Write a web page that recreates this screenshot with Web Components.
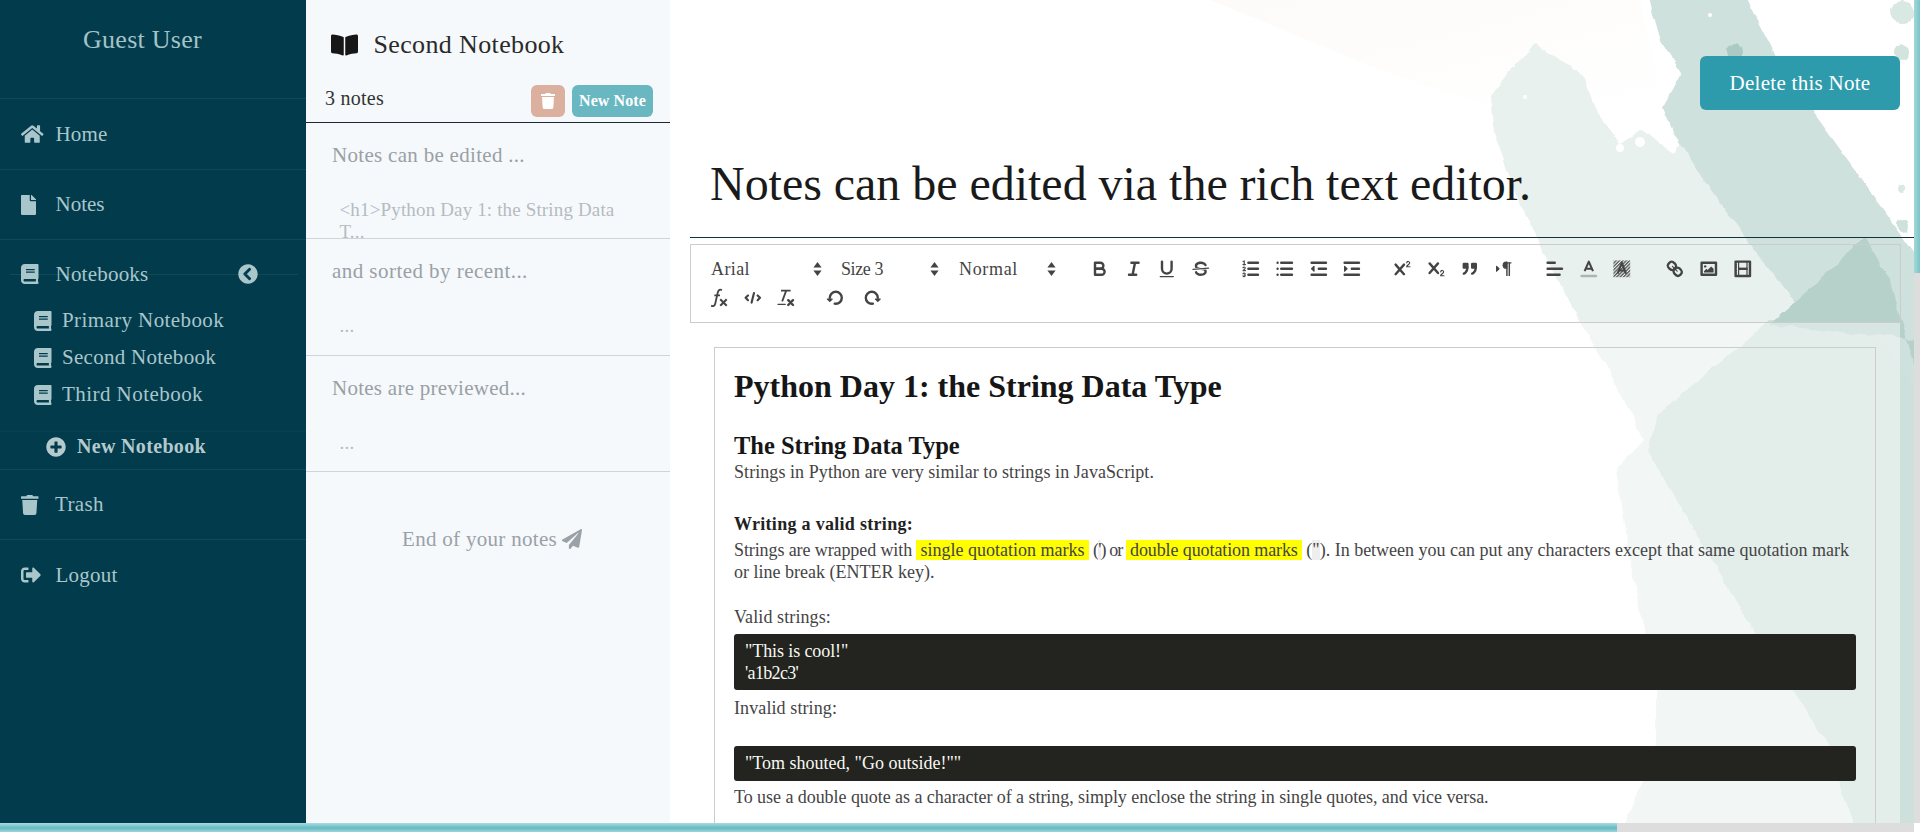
<!doctype html>
<html lang="en"><head><meta charset="utf-8"><title>Notes</title>
<style>
html,body{margin:0;height:100%;overflow:hidden;background:#fff}
body{font-family:"Liberation Serif",serif;color:#444}
</style></head>
<body>
<notes-app>
  <side-bar slot="side">
    <span slot="user">Guest User</span>
    <nav-item icon="home" ls=".17">Home</nav-item>
    <nav-item icon="file" h="69">Notes</nav-item>
    <notebook-group>
      <span slot="label" style="letter-spacing:.22px">Notebooks</span>
      <book-link ls=".4">Primary Notebook</book-link>
      <book-link ls=".27">Second Notebook</book-link>
      <book-link ls=".45">Third Notebook</book-link>
      <span slot="new">New Notebook</span>
    </notebook-group>
    <nav-item icon="trash" ls=".38" gap="34" h="69">Trash</nav-item>
    <nav-item icon="out" ls=".22" last>Logout</nav-item>
  </side-bar>
  <note-panel slot="panel">
    <span slot="title">Second Notebook</span>
    <span slot="count">3 notes</span>
    <note-item ls=".3" pls=".15"><span slot="title">Notes can be edited ...</span>&lt;h1&gt;Python Day 1: the String Data T...</note-item>
    <note-item ls=".45" pls=".2" h="117"><span slot="title">and sorted by recent...</span>...</note-item>
    <note-item ls=".26" pls=".2"><span slot="title">Notes are previewed...</span>...</note-item>
  </note-panel>
  <main-pane slot="main">
    <span slot="title">Notes can be edited via the rich text editor.</span>
    <rich-toolbar slot="toolbar"></rich-toolbar>
    <note-doc slot="doc"></note-doc>
  </main-pane>
</notes-app>

<script>
const FA={
home:[576,'M280.37 148.26L96 300.11V464a16 16 0 0 0 16 16l112.06-.29a16 16 0 0 0 15.92-16V368a16 16 0 0 1 16-16h64a16 16 0 0 1 16 16v95.64a16 16 0 0 0 16 16.05L464 480a16 16 0 0 0 16-16V300L295.67 148.26a12.19 12.19 0 0 0-15.3 0zM571.6 251.47L488 182.56V44.05a12 12 0 0 0-12-12h-56a12 12 0 0 0-12 12v72.61L318.47 43a48 48 0 0 0-61 0L4.34 251.47a12 12 0 0 0-1.6 16.9l25.5 31A12 12 0 0 0 45.15 301l235.22-193.74a12.19 12.19 0 0 1 15.3 0L530.9 301a12 12 0 0 0 16.9-1.6l25.5-31a12 12 0 0 0-1.7-16.93z'],
file:[384,'M224 136V0H24C10.7 0 0 10.7 0 24v464c0 13.3 10.7 24 24 24h336c13.3 0 24-10.7 24-24V160H248c-13.2 0-24-10.8-24-24zm160-14.1v6.1H256V0h6.1c6.4 0 12.5 2.5 17 7l97.9 98c4.5 4.5 7 10.6 7 16.9z'],
book:[448,'M448 360V24c0-13.3-10.7-24-24-24H96C43 0 0 43 0 96v320c0 53 43 96 96 96h328c13.3 0 24-10.7 24-24v-16c0-7.5-3.5-14.3-8.9-18.7-4.2-15.4-4.2-59.3 0-74.7 5.4-4.3 8.9-11.1 8.9-18.6zM128 134c0-3.3 2.7-6 6-6h212c3.3 0 6 2.7 6 6v20c0 3.3-2.7 6-6 6H134c-3.3 0-6-2.7-6-6v-20zm0 64c0-3.3 2.7-6 6-6h212c3.3 0 6 2.7 6 6v20c0 3.3-2.7 6-6 6H134c-3.3 0-6-2.7-6-6v-20zm253.4 250H96c-17.7 0-32-14.3-32-32 0-17.6 14.4-32 32-32h285.4c-1.9 17.1-1.9 46.9 0 64z'],
open:[576,'M542.22 32.05c-54.8 3.11-163.72 14.43-230.96 55.59-4.64 2.84-7.27 7.89-7.27 13.17v363.87c0 11.55 12.63 18.85 23.28 13.49 69.18-34.82 169.23-44.32 218.7-46.92 16.89-.89 30.02-14.43 30.02-30.66V62.75c.01-17.71-15.35-31.74-33.77-30.7zM264.73 87.64C197.5 46.48 88.58 35.17 33.78 32.05 15.36 31.01 0 45.04 0 62.75V400.6c0 16.24 13.13 29.78 30.02 30.66 49.49 2.6 149.59 12.11 218.77 46.95 10.62 5.35 23.21-1.94 23.21-13.46V100.63c0-5.29-2.62-10.14-7.27-12.99z'],
chev:[512,'M256 504C119 504 8 393 8 256S119 8 256 8s248 111 248 248-111 248-248 248zM142.1 273l135.5 135.5c9.4 9.4 24.6 9.4 33.9 0l17-17c9.4-9.4 9.4-24.6 0-33.9L226.9 256l101.6-101.6c9.4-9.4 9.4-24.6 0-33.9l-17-17c-9.4-9.4-24.6-9.4-33.9 0L142.1 239c-9.4 9.4-9.4 24.6 0 34z'],
plus:[512,'M256 8C119 8 8 119 8 256s111 248 248 248 248-111 248-248S393 8 256 8zm144 276c0 6.6-5.4 12-12 12h-92v92c0 6.6-5.4 12-12 12h-56c-6.6 0-12-5.4-12-12v-92h-92c-6.6 0-12-5.4-12-12v-56c0-6.6 5.4-12 12-12h92v-92c0-6.6 5.4-12 12-12h56c6.6 0 12 5.4 12 12v92h92c6.6 0 12 5.4 12 12v56z'],
trash:[448,'M432 32H312l-9.4-18.7A24 24 0 0 0 281.1 0H166.8a23.72 23.72 0 0 0-21.4 13.3L136 32H16A16 16 0 0 0 0 48v32a16 16 0 0 0 16 16h416a16 16 0 0 0 16-16V48a16 16 0 0 0-16-16zM53.2 467a48 48 0 0 0 47.9 45h245.8a48 48 0 0 0 47.9-45L416 128H32z'],
out:[512,'M497 273L329 441c-15 15-41 4.5-41-17v-96H152c-13.3 0-24-10.7-24-24v-96c0-13.3 10.7-24 24-24h136V88c0-21.4 25.9-32 41-17l168 168c9.3 9.4 9.3 24.6 0 34zM192 436v-40c0-6.6-5.4-12-12-12H96c-17.7 0-32-14.3-32-32V160c0-17.7 14.3-32 32-32h84c6.6 0 12-5.4 12-12V76c0-6.6-5.4-12-12-12H96c-53 0-96 43-96 96v192c0 53 43 96 96 96h84c6.6 0 12-5.4 12-12z'],
plane:[512,'M476 3.2L12.5 270.6c-18.1 10.4-15.8 35.6 2.2 43.2L121 358.4l287.3-253.2c5.5-4.9 13.3 2.6 8.6 8.3L176 407v80.5c0 23.6 28.5 32.9 42.5 15.8L282 426l124.6 52.2c14.2 6 30.4-2.9 33-18.2l72-432C515 7.8 493.3-6.8 476 3.2z']
};
const fa=(n,z)=>{const [w,d]=FA[n];return `<svg xmlns="http://www.w3.org/2000/svg" viewBox="0 0 ${w} 512" width="${w*z/512}" height="${z}" fill="currentColor" style="display:block;flex:none"><path d="${d}"/></svg>`};

function def(tag,css,html,init){
  customElements.define(tag,class extends HTMLElement{
    constructor(){super();const r=this.attachShadow({mode:'open'});
      r.innerHTML=`<style>${css}</style>`+(typeof html==='function'?html(this):html);
      if(init)init(this,r)}
  });
}

/* ---------- shell ---------- */
def('notes-app',`:host{display:flex;flex-direction:column;width:1920px;height:832px}
.row{display:flex;flex:1;min-height:0}
.vbar{width:6px;flex:none;background:#ddd}
.vthumb{height:273px;background:linear-gradient(90deg,#a2d9d9,#7cc3c9)}
.foot{display:flex;height:9px;flex:none}
.htrack{flex:1;background:#ddd}
.hthumb{width:1617px;height:100%;background:linear-gradient(#a9dcdc,#64bac3 55%,#9ed6d8)}
.corner{width:6px;background:#fff}`,
`<div class="row"><slot name="side"></slot><slot name="panel"></slot><slot name="main"></slot><div class="vbar"><div class="vthumb"></div></div></div>
<div class="foot"><div class="htrack"><div class="hthumb"></div></div><div class="corner"></div></div>`);

/* ---------- sidebar ---------- */
def('side-bar',`:host{display:block;width:306px;flex:none;background:#023b4c;color:#a9c6cb;font-size:21px}
.user{height:98px;border-bottom:1px solid #10495a;text-align:center;font-size:26px;letter-spacing:.27px;line-height:30px;color:#a3c3c7}
.user span{display:block;padding:25px 21px 0 0}`,
`<div class="user"><span><slot name="user"></slot></span></div><slot></slot>`);

def('nav-item',`:host{display:flex;align-items:center;padding-left:21px;border-bottom:1px solid #10495a}
:host([last]){border-bottom:0}
.i{width:34.5px;flex:none}`,
el=>{el.style.height=(el.getAttribute('h')||70)+'px';return `<div class="i" style="${el.getAttribute('gap')?`width:${el.getAttribute('gap')}px`:''}">${fa(el.getAttribute('icon'),20)}</div><span style="letter-spacing:${el.getAttribute('ls')||0}px"><slot></slot></span>`});

def('notebook-group',`:host{display:block;border-bottom:1px solid #10495a;height:230px;box-sizing:border-box}
.head{display:flex;align-items:center;height:62px;padding:6px 48px 0 21px;box-sizing:border-box;
 background:linear-gradient(#10495a,#10495a) 10px 34px/288px 1px no-repeat;width:306px}
.i{width:34.5px;flex:none}
.grow{flex:1}
.list{height:111px;margin-bottom:18px}
.new{display:flex;align-items:center;height:37px;padding:0 0 7px 46px;box-sizing:border-box;border-top:1px solid #07404f;font-weight:700;font-size:20px;letter-spacing:.33px;color:#b4cace}
.new .i{width:31px}`,
`<div class="head"><div class="i">${fa('book',20)}</div><slot name="label"></slot><div class="grow"></div>${fa('chev',20)}</div>
<div class="list"><slot></slot></div>
<div class="new"><div class="i">${fa('plus',20)}</div><slot name="new"></slot></div>`);

def('book-link',`:host{display:flex;align-items:center;height:37px;padding-left:34px}
.i{width:28px;flex:none}`,
el=>`<div class="i">${fa('book',20)}</div><span style="letter-spacing:${el.getAttribute('ls')||0}px"><slot></slot></span>`);

/* ---------- note list ---------- */
def('note-panel',`:host{display:block;width:364px;flex:none;background:#f5f9fc;color:#222}
.title{display:flex;align-items:center;height:85px;box-sizing:border-box;padding:4px 0 0 25px;font-size:26px;letter-spacing:.36px;color:#2a2a2a}
.title .i{width:42.5px;color:#171717;flex:none}
.bar{display:flex;align-items:center;height:38px;box-sizing:border-box;padding:0 17px 5px 19px;border-bottom:1px solid #1a2a33;font-size:20px;letter-spacing:.25px;color:#333}
.bar .c{flex:1;padding-bottom:5px}
button{all:unset;box-sizing:border-box;height:32px;border-radius:6px;display:flex;align-items:center;justify-content:center;color:#fff}
.del{width:34px;background:#dcb09e;margin-right:7px}
.new{width:81px;background:#68b7c1;font:700 16px "Liberation Serif",serif;letter-spacing:.1px}
.end{display:flex;align-items:center;justify-content:center;gap:5px;padding:55px 0 0 8px;font-size:21px;letter-spacing:.3px;color:#9aa1a7;line-height:24px}`,
`<div class="title"><div class="i">${fa('open',24)}</div><slot name="title"></slot></div>
<div class="bar"><span class="c"><slot name="count"></slot></span><button class="del" aria-label="Delete notebook">${fa('trash',16)}</button><button class="new">New Note</button></div>
<slot></slot>
<div class="end"><span>End of your notes</span>${fa('plane',20)}</div>`);

def('note-item',`:host{display:block;box-sizing:border-box;border-bottom:1px solid #cfd4d8;overflow:hidden}
.t{padding:20px 0 0 26px;font-size:21px;line-height:24px;color:#9aa0a5}
.p{margin:32px 0 0 33.5px;width:300px;font-size:19px;line-height:22px;color:#b6bbbf}`,
el=>{el.style.height=(el.getAttribute('h')||116)+'px';return `<div class="t" style="letter-spacing:${el.getAttribute('ls')}px"><slot name="title"></slot></div><div class="p" style="letter-spacing:${el.getAttribute('pls')}px"><slot></slot></div>`});

/* ---------- main ---------- */
def('wash-bg',`:host{position:absolute;inset:0;display:block;overflow:hidden}svg{display:block}`,
`<svg xmlns="http://www.w3.org/2000/svg" width="1244" height="823" viewBox="670 0 1244 823">
<defs><filter id="rough" filterUnits="userSpaceOnUse" x="1300" y="-20" width="640" height="870" color-interpolation-filters="sRGB">
<feTurbulence type="fractalNoise" baseFrequency=".05" numOctaves="3" seed="7"/>
<feDisplacementMap in="SourceGraphic" scale="7" xChannelSelector="R" yChannelSelector="G"/></filter>
<linearGradient id="warm" x1="0" y1="0" x2="1" y2="1"><stop offset="0" stop-color="#fdfbf9"/><stop offset="1" stop-color="#fff"/></linearGradient></defs>
<polygon points="1210,0 1640,0 1660,90 1500,110 1380,70" fill="url(#warm)"/>
<g filter="url(#rough)">
<polygon fill="#e8f1ee" points="1490,97 1510,70 1537,43 1560,60 1585,77 1595,110 1620,143 1640,130 1675,153 1700,110 1853,167 1914,260 1920,840 1616,840 1656,753 1656,687 1628,553 1616,470 1644,440 1632,413 1577,317 1521,207 1494,133"/>
<polygon fill="#cfe1dc" points="1644,-15 1660,40 1682,72 1662,108 1672,130 1700,175 1770,270 1830,350 1890,470 1925,560 1925,270 1853,167 1790,80 1775,53 1740,-15"/>
<polygon fill="#cde0db" points="1656,417 1770,320 1870,323 1925,400 1925,840 1858,840 1826,740 1755,633 1648,453"/>
<polygon fill="#b6d1ca" points="1806,293 1865,237 1890,280 1925,400 1925,340 1770,325"/>
<circle cx="1735" cy="52" r="8" fill="#abcac3"/>
<circle cx="1902" cy="12" r="11" fill="#dae8e4"/>
<circle cx="1903" cy="52" r="8" fill="#d3e3de"/>
<circle cx="1901" cy="188" r="4" fill="#dae8e4"/>
<circle cx="1903" cy="225" r="6" fill="#cfe1dc"/>
</g>
<g fill="#fff"><circle cx="1525" cy="97" r="2"/><circle cx="1620" cy="148" r="4"/><circle cx="1640" cy="142" r="5"/><circle cx="1710" cy="15" r="2"/></g>
</svg>`);

def('main-pane',`:host{display:flex;flex-direction:column;flex:1;min-width:0;position:relative;overflow:hidden;background:#fff}
.content{position:relative;display:flex;flex-direction:column;flex:1;min-height:0;padding-left:20px}
.top{display:flex;justify-content:flex-end;padding:56px 14px 0 0}
button{all:unset;box-sizing:border-box;width:200px;height:54px;border-radius:6px;background:#2e9bac;color:#fff;text-align:center;font:21px "Liberation Serif",serif;letter-spacing:.28px}
h1{margin:46px 0 25px 20px;font-weight:400;font-size:48px;line-height:56px;letter-spacing:-.03px;color:#1a1a1a;white-space:nowrap}
hr{margin:0 0 6px;border:0;border-top:1px solid #0f3440;height:0}
.body{flex:1;min-height:0;width:1210px;background:rgba(255,255,255,.45);padding:24px 24px 0;box-sizing:border-box;overflow:hidden;display:flex}`,
`<wash-bg></wash-bg><div class="content"><div class="top"><button>Delete this Note</button></div>
<h1><slot name="title"></slot></h1><hr><slot name="toolbar"></slot><div class="body"><slot name="doc"></slot></div></div>`);

/* ---------- toolbar ---------- */
const T=(d)=>`<svg xmlns="http://www.w3.org/2000/svg" viewBox="0 0 18 18" width="21.6" height="21.6" fill="none" stroke="#444" stroke-width="2" stroke-linecap="round" stroke-linejoin="round" style="display:block">${d}</svg>`;
const F='fill="#444" stroke="none"';
const FS='fill="#444" stroke-width="1"';
const Q={
bold:'<path d="M5,4H9.5A2.5,2.5,0,0,1,12,6.5v0A2.5,2.5,0,0,1,9.5,9H5A0,0,0,0,1,5,9V4A0,0,0,0,1,5,4Z"/><path d="M5,9h5.5A2.5,2.5,0,0,1,13,11.5v0A2.5,2.5,0,0,1,10.5,14H5a0,0,0,0,1,0,0V9A0,0,0,0,1,5,9Z"/>',
italic:'<path d="M7 4H13M5 14H11M8 14L10 4"/>',
underline:`<path d="M5,3V9a4.012,4.012,0,0,0,4,4H9a4.012,4.012,0,0,0,4-4V3"/><rect ${F} height="1" rx=".5" width="12" x="3" y="15"/>`,
strike:`<path stroke-width="1" d="M15.5 8.5L2.5 9.5"/><path ${F} d="M9.007,8C6.542,7.791,6,7.519,6,6.5,6,5.792,7.283,5,9,5c1.571,0,2.765.679,2.969,1.309a1,1,0,0,0,1.9-.617C13.356,4.106,11.354,3,9,3,6.2,3,4,4.538,4,6.5a3.2,3.2,0,0,0,.5,1.843Z"/><path ${F} d="M8.984,10C11.457,10.208,12,10.479,12,11.5c0,.708-1.283,1.5-3,1.5-1.571,0-2.765-.679-2.969-1.309a1,1,0,1,0-1.9.617C4.644,13.894,6.646,15,9,15c2.8,0,5-1.538,5-3.5a3.2,3.2,0,0,0-.5-1.843Z"/>`,
ol:`<path d="M7 4H15M7 9H15M7 14H15"/><path stroke-width="1" d="M2.5 5.5H4.5"/><path ${F} d="M3.5,6A.5.5,0,0,1,3,5.5V3.085l-.276.138A.5.5,0,0,1,2.053,3c-.124-.247-.023-.324.224-.447l1-.5A.5.5,0,0,1,4,2.5v3A.5.5,0,0,1,3.5,6Z"/><path stroke-width="1" d="M4.5,10.5h-2c0-.234,1.85-1.076,1.85-2.234A.959.959,0,0,0,2.5,8.156"/><path stroke-width="1" d="M2.5,14.846a.959.959,0,0,0,1.85-.109A.7.7,0,0,0,3.75,14a.688.688,0,0,0,.6-.736,.959.959,0,0,0-1.85-.109"/>`,
ul:'<path d="M6 4H15M6 9H15M6 14H15M3 4H3M3 9H3M3 14H3"/>',
outdent:`<path d="M3 14H15M3 4H15M9 9H15"/><polygon ${FS} points="5 7 5 11 3 9"/>`,
indent:`<path d="M3 14H15M3 4H15M9 9H15"/><polygon ${FS} points="3 7 3 11 5 9"/>`,
sup:'<path d="M3 5.5L10 13.5M10 5.5L3 13.5"/><path stroke-width="1" d="M12.3 4a1.2 1.2 0 0 1 2.4.2c0 1-2.5 1.9-2.5 3.1h2.8"/>',
sub:'<path d="M3 4.5L10 12.5M10 4.5L3 12.5"/><path stroke-width="1" d="M12.3 11.5a1.2 1.2 0 0 1 2.4.2c0 1-2.5 1.9-2.5 3.1h2.8"/>',
quote:`<rect fill="#444" height="3" width="3" x="4" y="5"/><rect fill="#444" height="3" width="3" x="11" y="5"/><path fill="#444" d="M7,8c0,4.031-3,5-3,5"/><path fill="#444" d="M14,8c0,4.031-3,5-3,5"/>`,
dir:`<polygon ${FS} points="3 11 5 9 3 7"/><path stroke-width="1" d="M15 4H11"/><path ${F} d="M11,3a3,3,0,0,0,0,6h1V3H11Z"/><rect ${F} height="11" width="1.2" x="11" y="4"/><rect ${F} height="11" width="1.2" x="13" y="4"/>`,
align:'<path d="M3 9H15M3 14H13M3 4H9"/>',
color:'<path stroke="#a9b6b4" d="M3 15H15"/><path stroke-width="1.7" stroke-linecap="butt" d="M5.5 11L9 3L12.5 11M11.6 9H6.4"/>',
bg:`<defs><pattern id="h" width="2" height="2" patternUnits="userSpaceOnUse" patternTransform="rotate(45)"><rect width="1.1" height="2" fill="#555" stroke="none"/></pattern></defs><rect x="2" y="2" width="14" height="14" fill="url(#h)" stroke="none"/><path stroke-width="1.7" stroke-linecap="butt" d="M5.5 13L9 4L12.5 13M11.6 10.5H6.4"/>`,
link:'<path stroke-width="1" d="M7 7L11 11"/><path d="M8.9,4.577a3.476,3.476,0,0,1,.36,4.679A3.476,3.476,0,0,1,4.577,8.9C3.185,7.5,2.035,6.4,4.217,4.217S7.5,3.185,8.9,4.577Z"/><path d="M13.423,9.1a3.476,3.476,0,0,0-4.679-.36,3.476,3.476,0,0,0,.36,4.679c1.392,1.392,2.5,2.542,4.679.36S14.815,10.5,13.423,9.1Z"/>',
image:`<rect height="10" width="12" x="3" y="4"/><circle ${F} cx="6" cy="7" r="1"/><polygon ${F} points="5 12 5 11 7 9 8 10 11 7 13 9 13 12"/>`,
video:`<rect height="12" width="12" x="3" y="3"/><g ${F}><rect height="12" width="1" x="5" y="3"/><rect height="12" width="1" x="12" y="3"/><rect height="2" width="8" x="5" y="8"/><rect height="1" width="1" x="3" y="5"/><rect height="1" width="1" x="3" y="7"/><rect height="1" width="1" x="3" y="10"/><rect height="1" width="1" x="3" y="12"/><rect height="1" width="1" x="14" y="5"/><rect height="1" width="1" x="14" y="7"/><rect height="1" width="1" x="14" y="10"/><rect height="1" width="1" x="14" y="12"/></g>`,
formula:'<path stroke-width="1.5" stroke-linecap="butt" d="M11.6 2.6C10 1.7 8.7 2.3 8.2 4.4L6 14c-.4 1.8-1.7 2.3-3.4 1.5M5.3 7H10"/><path stroke-width="1.7" stroke-linecap="butt" d="M10.2 10.2L15.6 15.6M15.6 10.2L10.2 15.6"/>',
code:'<path d="M5 7L3 9L5 11M13 7L15 9L13 11M10 5L8 13" stroke-width="1.8"/>',
clean:`<path stroke-width="1.5" stroke-linecap="butt" d="M5 3H13M6 12L9.35 3"/><path d="M11 11L15 15M15 11L11 15"/><rect ${F} height="1" rx=".5" width="7" x="2" y="14"/>`,
undo:`<polygon ${FS} points="6 10 4 12 2 10"/><path d="M8.09,13.91A4.6,4.6,0,0,0,9,14,5,5,0,1,0,4,9"/>`,
redo:`<polygon ${FS} points="12 10 14 12 16 10"/><path d="M9.91,13.91A4.6,4.6,0,0,1,9,14a5,5,0,1,1,5-5"/>`
};
def('tb-btn',`:host{display:flex;align-items:center;justify-content:center;width:33.6px;height:30px;flex:none}`,el=>T(Q[el.getAttribute('i')]));
def('tb-picker',`:host{display:flex;align-items:center;justify-content:space-between;height:30px;box-sizing:border-box;flex:none;font-size:18px;color:#444}
svg{display:block;flex:none}`,
el=>`<span style="letter-spacing:${el.getAttribute('ls')}px"><slot></slot></span><svg width="9" height="14" viewBox="0 0 9 14" fill="#444"><path d="M4.5 0L8.6 5.6H.4ZM4.5 14L.4 8.4H8.6Z"/></svg>`);
const grp=(names,mr)=>`<div class="g" style="margin-right:${mr}px">${names.map(n=>`<tb-btn i="${n}"></tb-btn>`).join('')}</div>`;
def('rich-toolbar',`:host{display:block;width:1211px;height:79px;box-sizing:border-box;border:1px solid #ccc;padding:9px 0 0 12px}
.r{display:flex;height:30px}.g{display:flex}`,
`<div class="r"><div class="g" style="margin-right:23px">
<tb-picker style="width:123px;padding:0 4px 0 8px" ls=".4">Arial</tb-picker>
<tb-picker style="width:117px;padding:0 4px 0 15px" ls="-.4">Size 3</tb-picker>
<tb-picker style="width:117px;padding:0 4px 0 16px" ls=".66">Normal</tb-picker></div>
${grp(['bold','italic','underline','strike'],17)}${grp(['ol','ul','outdent','indent'],17.5)}${grp(['sup','sub','quote','dir'],17.5)}${grp(['align','color','bg'],19.5)}${grp(['link','image','video'],0)}</div>
<div class="r" style="margin:-1px 0 0 -1px">${grp(['formula','code','clean'],16)}${grp(['undo'],2.4)}${grp(['redo'],0)}</div>`);

/* ---------- document ---------- */
def('code-block',`:host{display:block;background:#23241f;color:#f8f8f2;border-radius:3px;padding:6px 11px;font-size:18px;line-height:22px}`,`<slot></slot>`);
def('note-doc',`:host{display:block;flex:1;border:1px solid #ccc;border-bottom:0;padding:16px 19px 0;font-size:18px;line-height:21.5px;color:#444;min-height:700px;box-sizing:border-box}
h1{margin:0 0 23px;font-size:32px;line-height:44px;font-weight:700;color:#161616;letter-spacing:0;white-space:nowrap}
h2{margin:0;font-size:24.5px;line-height:30px;font-weight:700;color:#161616;letter-spacing:0}
p{margin:0}
b{color:#222;font-weight:700;font-size:18px;letter-spacing:.3px}
mark{background:#ff0;color:#444;padding:0 4px}
i{font-style:normal;background:#eee}`,
`<h1>Python Day 1: the String Data Type</h1>
<h2>The String Data Type</h2>
<p style="letter-spacing:.067px;height:22px;line-height:22px">Strings in Python are very similar to strings in JavaScript.</p>
<p style="margin-top:31px;height:26px"><b>Writing a valid string:</b></p>
<p><span style="letter-spacing:-.1px">Strings are wrapped with </span><mark style="padding:0 5px 0 4px">single quotation marks</mark><span style="letter-spacing:-.9px"> (<i>'</i>) or </span><mark style="letter-spacing:-.1px">double quotation marks</mark> (<i>"</i>). In between you can put any characters except that same quotation mark<br>or line break (ENTER key).</p>
<p style="margin-top:23px;height:22px;line-height:22px;letter-spacing:.1px">Valid strings:</p>
<code-block style="margin:6px 0 7px"><span style="letter-spacing:-.1px">"This is cool!"</span><br><span style="letter-spacing:-.67px">'a1b2c3'</span></code-block>
<p style="height:22px;line-height:22px;letter-spacing:.1px">Invalid string:</p>
<code-block style="margin:27px 0 5px;padding:6px 11px 7px">"Tom shouted, "Go outside!""</code-block>
<p style="height:22px;line-height:22px;letter-spacing:-.05px">To use a double quote as a character of a string, simply enclose the string in single quotes, and vice versa.</p>`);
</script>
</body></html>
